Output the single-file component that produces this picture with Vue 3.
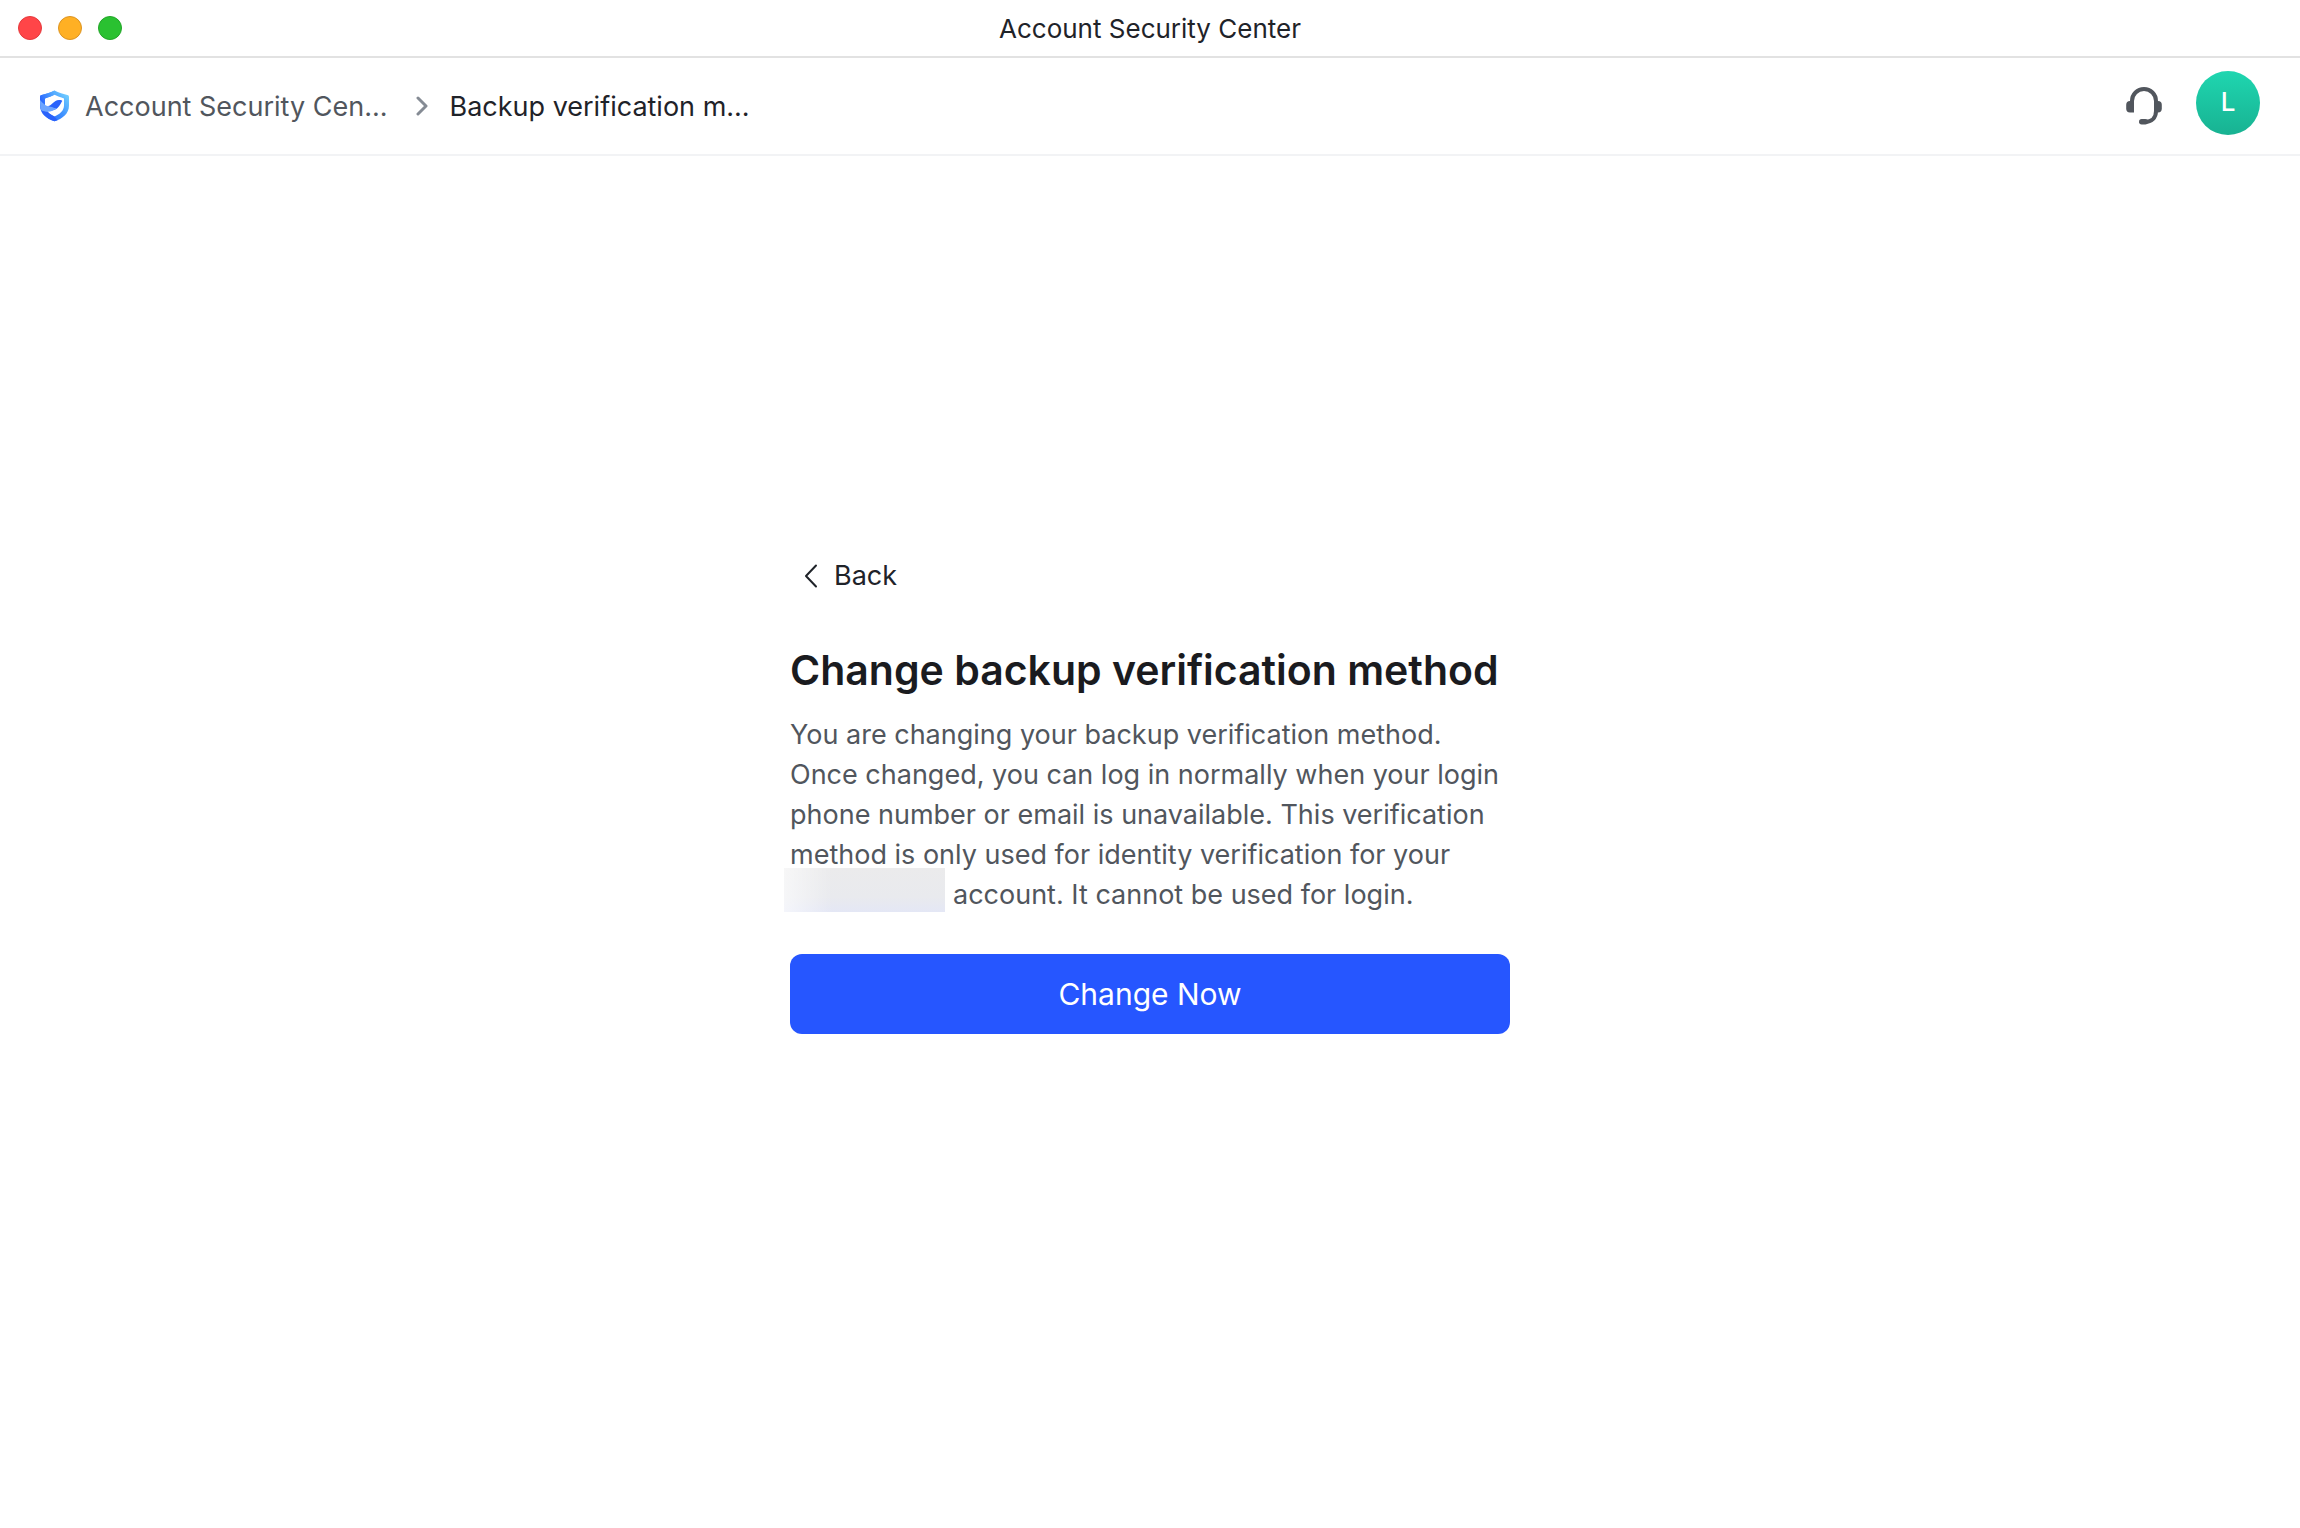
<script setup>
import { ref } from 'vue'

const windowTitle = 'Account Security Center'
const userInitial = 'L'

const windowControls = [
  { name: 'close', label: 'Close window' },
  { name: 'minimize', label: 'Minimize window' },
  { name: 'zoom', label: 'Zoom window' }
]

const descriptionLines = [
  'You are changing your backup verification method.',
  'Once changed, you can log in normally when your login',
  'phone number or email is unavailable. This verification',
  'method is only used for identity verification for your'
]

const changing = ref(false)

const startChange = () => {
  changing.value = true
}

const goBack = () => {
  changing.value = false
}
</script>

<template>
  <div class="window">
    <div class="title-bar">
      <div class="window-controls">
        <button
          v-for="control in windowControls"
          :key="control.name"
          type="button"
          :class="['window-control', control.name]"
          :aria-label="control.label"
        ></button>
      </div>
      <div class="window-title">{{ windowTitle }}</div>
    </div>

    <header class="header">
      <nav class="breadcrumb" aria-label="Breadcrumb">
        <svg class="logo" viewBox="0 0 30 32" aria-hidden="true">
          <defs>
            <linearGradient id="shield" x1="0.1" y1="0.8" x2="0.9" y2="0.1">
              <stop offset="0" stop-color="#2a6bff" />
              <stop offset="0.5" stop-color="#3f92ff" />
              <stop offset="1" stop-color="#70cdff" />
            </linearGradient>
            <linearGradient id="shield-top" x1="0" y1="0.5" x2="1" y2="0">
              <stop offset="0" stop-color="#2a68ff" />
              <stop offset="1" stop-color="#5ab4ff" />
            </linearGradient>
          </defs>
          <path
            fill="url(#shield)"
            fill-rule="evenodd"
            d="M14.500 0.500 C18.500 2.800 23.500 4 28.200 5.200 Q29 5.600 29 7 V15.500 C29 23.500 22.500 29 14.500 31.200 C6.500 29 0 23.500 0 15.500 V7 Q0 5.600 0.800 5.200 C5.500 4 10.500 2.800 14.500 0.500 Z M14.500 4.800 C11.500 6.400 8.500 7.400 5 8.400 V15.500 C5 20.500 9.500 24.500 14.500 26.400 C19.500 24.500 24 20.500 24 15.500 V8.400 C20.500 7.400 17.500 6.400 14.500 4.800 Z"
          />
          <path fill="url(#shield-top)" d="M0 14 V7 Q0 5.600 0.800 5.200 C5.500 4 10.500 2.800 14.500 0.500 V4.800 C11.500 6.400 8.500 7.400 5 8.400 V16 Z" />
          <path fill="#2a62fb" d="M1.500 20.500 L6.500 20 C8 23 11 25 14.500 26.400 L17.500 30.200 L14.500 31.200 C9 29.500 3.500 26 1.500 20.500 Z" />
          <path fill="#2a62fb" d="M8 16 C12 16 13.500 10.200 19 10.100 C20.500 10 22 10.200 22.300 11 C20.500 13.500 18.500 20 11.500 20.500 Z" />
          <path fill="#6da5ff" d="M0 10 C3 13.500 6 16.500 10.500 16.800 C13 17.100 14 18.500 16.500 18 C12.500 22.500 6 22.500 1.300 20.200 C0.300 18 0 15 0 10 Z" />
        </svg>
        <a href="#" class="crumb">Account Security Cen...</a>
        <svg class="crumb-arrow" viewBox="0 0 12 20" aria-hidden="true">
          <path d="M2 2 L10 10 L2 18" />
        </svg>
        <span class="crumb current" aria-current="page">Backup verification m...</span>
      </nav>

      <div class="header-actions">
        <button type="button" class="support" aria-label="Support">
          <svg viewBox="0 0 36 38" aria-hidden="true">
            <path class="band" d="M6 15 V14 A12 12 0 0 1 30 14 V24 C30 31 25.500 34.800 19 35" />
            <path class="pad" d="M8 14 H4 Q0.200 14 0.200 18 V21.500 Q0.200 25.500 4 25.500 H8 Z" />
            <path class="pad" d="M28 14 H32 Q35.800 14 35.800 18 V21.500 Q35.800 25.500 32 25.500 H28 Z" />
            <rect class="pad" x="13" y="32" width="9" height="5.500" rx="2.700" />
          </svg>
        </button>
        <button type="button" class="avatar" aria-label="Account menu">{{ userInitial }}</button>
      </div>
    </header>

    <main class="content">
      <section class="panel">
        <button type="button" class="back" @click="goBack">
          <svg viewBox="0 0 14 24" aria-hidden="true">
            <path d="M12 1.500 L2 12 L12 22.500" />
          </svg>
          Back
        </button>

        <h1>Change backup verification method</h1>

        <p class="description">
          <template v-for="line in descriptionLines" :key="line">{{ line }}<br></template>
          <span class="redacted"></span>account. It cannot be used for login.
        </p>

        <button type="button" class="primary" :aria-pressed="changing" @click="startChange">Change Now</button>
      </section>
    </main>
  </div>
</template>

<style>
body {
  margin: 0;
  background: #ffffff;
}
</style>

<style scoped>
.window {
  min-height: 100vh;
  background: #ffffff;
  color: #1f2329;
  font-family: Inter, "Liberation Sans", sans-serif;
  font-size: 27px;
  line-height: 40px;
}

button {
  padding: 0;
  border: none;
  background: none;
  color: inherit;
  font: inherit;
  cursor: pointer;
}

.title-bar {
  display: grid;
  grid-template-columns: 1fr auto 1fr;
  align-items: center;
  height: 56px;
  padding: 0 18px;
  border-bottom: 2px solid #e2e2e2;
}

.window-controls {
  display: flex;
  gap: 16px;
}

.window-control {
  width: 24px;
  height: 24px;
  border: 1px solid transparent;
  border-radius: 50%;
}

.window-control.close {
  background: #ff4548;
  border-color: #e5393c;
}

.window-control.minimize {
  background: #ffb024;
  border-color: #dc9422;
}

.window-control.zoom {
  background: #2ac131;
  border-color: #22a528;
}

.window-title {
  padding-top: 2px;
  font-size: 26px;
}

.header {
  display: flex;
  align-items: center;
  justify-content: space-between;
  height: 96px;
  padding: 0 40px;
  border-bottom: 2px solid #f2f3f5;
}

.breadcrumb {
  display: flex;
  align-items: center;
}

.logo {
  width: 30px;
  height: 32px;
  margin-right: 15px;
}

.crumb {
  padding-top: 2px;
  color: #51565d;
  text-decoration: none;
}

.crumb.current {
  color: #1f2329;
}

.crumb-arrow {
  width: 12px;
  height: 20px;
  margin: 0 21px 0 29px;
  fill: none;
  stroke: #858b94;
  stroke-width: 3;
  stroke-linecap: round;
  stroke-linejoin: round;
}

.header-actions {
  display: flex;
  align-items: center;
  gap: 34px;
}

.support svg {
  display: block;
  width: 36px;
  height: 38px;
}

.support .band {
  fill: none;
  stroke: #51565d;
  stroke-width: 4;
}

.support .pad {
  fill: #51565d;
}

.avatar {
  width: 64px;
  height: 64px;
  margin-bottom: 6px;
  padding-bottom: 2px;
  border-radius: 50%;
  background: linear-gradient(#1fd6b0, #18b292);
  color: #ffffff;
  font-size: 26px;
  font-weight: 500;
}

.content {
  display: flex;
  justify-content: center;
  padding: 400px 24px 24px;
}

.panel {
  width: 100%;
  max-width: 720px;
}

.back {
  display: flex;
  align-items: center;
  gap: 16px;
  padding-left: 14px;
}

.back svg {
  width: 14px;
  height: 24px;
  fill: none;
  stroke: #1f2329;
  stroke-width: 2;
  stroke-linecap: round;
  stroke-linejoin: round;
}

h1 {
  margin: 44px 0 15px;
  color: #1a1b1f;
  font-size: 41px;
  font-weight: 600;
  line-height: 60px;
}

.description {
  margin: 0 0 39px;
  color: #51565d;
}

.redacted {
  display: inline-block;
  width: 161px;
  height: 44px;
  margin: -12px 8px 2px -6px;
  background:
    linear-gradient(90deg, rgba(255, 255, 255, 0.6), transparent 30%),
    linear-gradient(#ebebec, #e9eaee 65%, #e4e7f5);
  vertical-align: middle;
}

.primary {
  display: block;
  width: 100%;
  height: 80px;
  border-radius: 12px;
  background: #2656ff;
  color: #ffffff;
  font-size: 30px;
}
</style>
